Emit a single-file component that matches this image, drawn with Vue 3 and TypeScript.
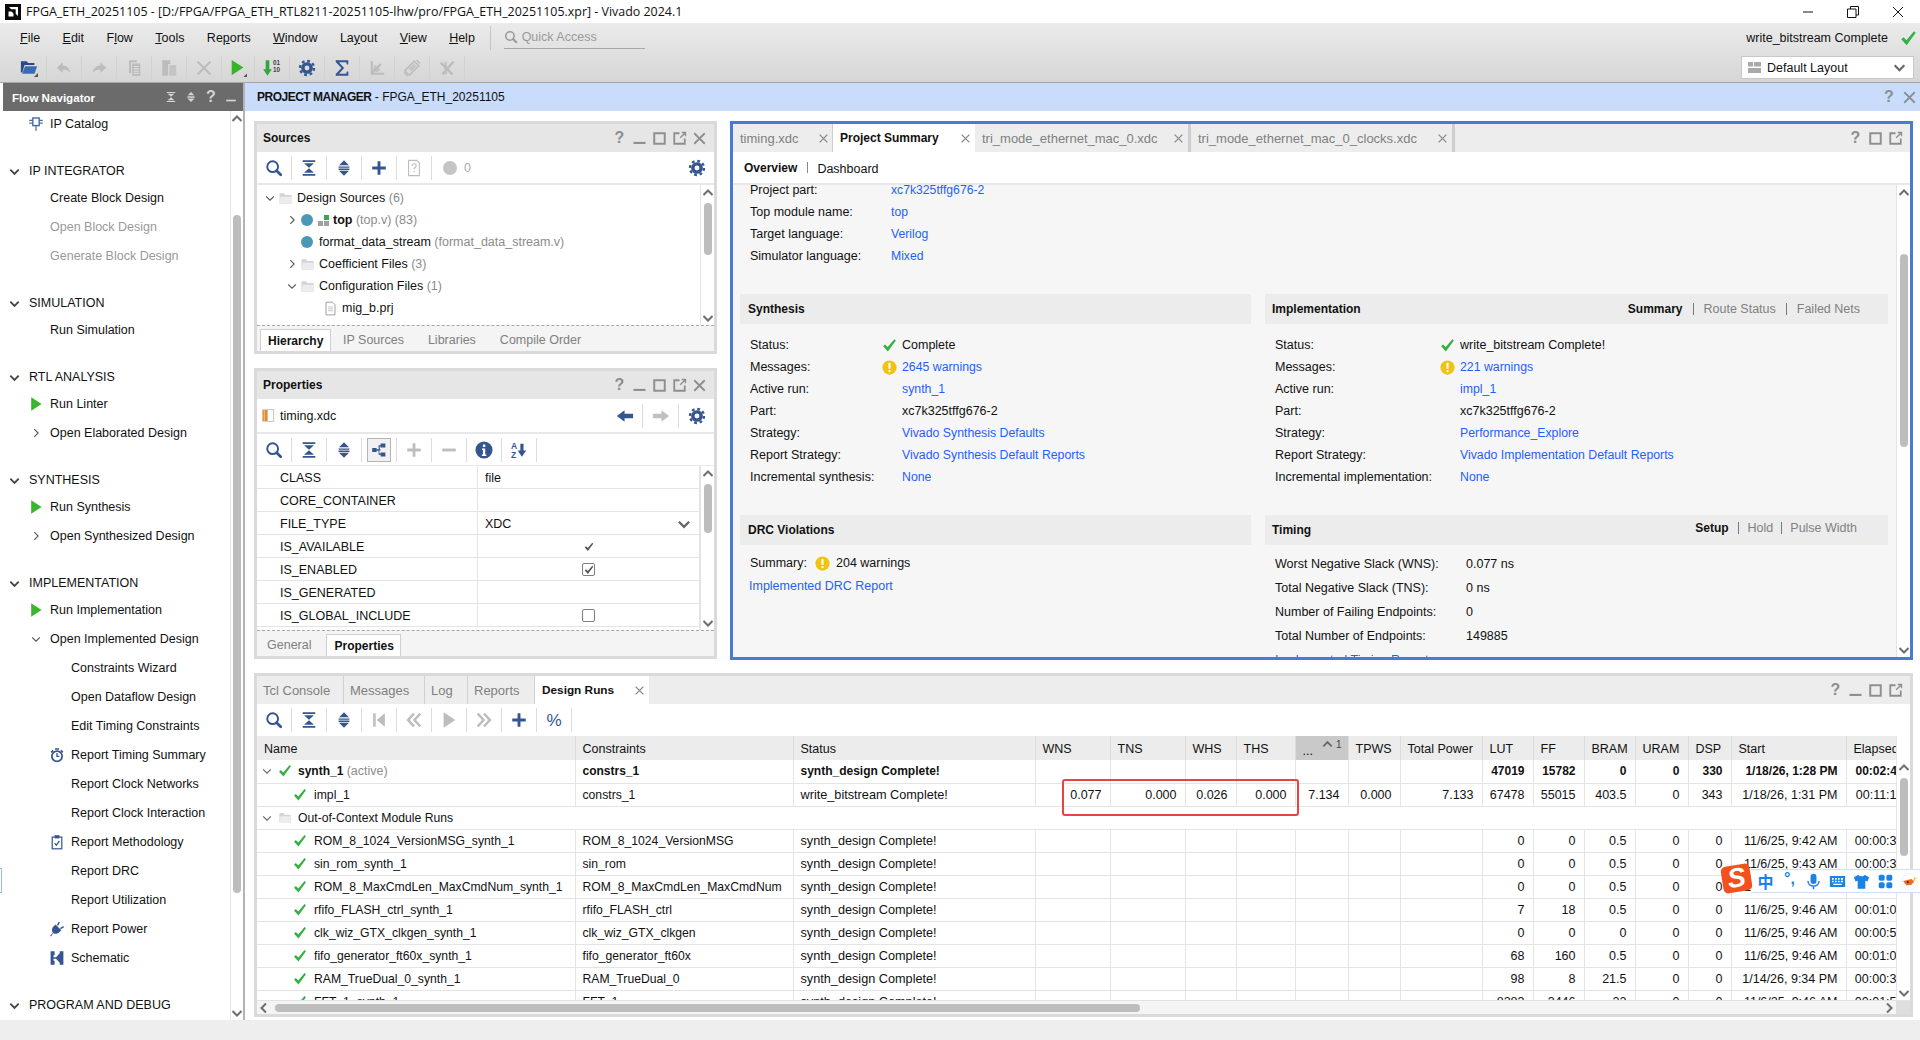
<script setup lang="ts">
interface NavItem { label: string; sub?: boolean; icon?: string; tone?: string; chev?: string; off?: boolean }
interface NavGroup { title: string; items: NavItem[] }
interface Btn { i: string; off?: boolean; sel?: boolean }
interface Run { name: string; icon: string; cons: string; status: string; cells: string[]; bold?: boolean }

const menus = [['F', 'ile'], ['E', 'dit'], ['F', 'l', 'ow'], ['T', 'ools'], ['Re', 'p', 'orts'], ['W', 'indow'], ['La', 'y', 'out'], ['V', 'iew'], ['H', 'elp']]
const menuParts = menus.map((m) => m.length === 2 ? { a: '', u: m[0], b: m[1] } : { a: m[0], u: m[1], b: m[2] })

const mainTools: Btn[] = [
  { i: 'open' }, { i: 'undo', off: true }, { i: 'redo', off: true }, { i: 'copy', off: true }, { i: 'paste', off: true }, { i: 'x', off: true },
  { i: 'playc' }, { i: 'bits' }, { i: 'gear' }, { i: 'sigma' }, { i: 'rt1', off: true }, { i: 'rt2', off: true }, { i: 'rt3', off: true }
]
const srcTools: Btn[] = [{ i: 'search' }, { i: 'collapse' }, { i: 'expand' }, { i: 'plus' }, { i: 'docq', off: true }]
const propTools: Btn[] = [{ i: 'search' }, { i: 'collapse' }, { i: 'expand' }, { i: 'hier', sel: true }, { i: 'plus', off: true }, { i: 'minus', off: true }, { i: 'info' }, { i: 'az' }]
const runTools: Btn[] = [{ i: 'search' }, { i: 'collapse' }, { i: 'expand' }, { i: 'first', off: true }, { i: 'rew', off: true }, { i: 'play', off: true }, { i: 'ffw', off: true }, { i: 'plus' }, { i: 'pct' }]

const nav: NavGroup[] = [
  { title: 'IP INTEGRATOR', items: [{ label: 'Create Block Design' }, { label: 'Open Block Design', off: true }, { label: 'Generate Block Design', off: true }] },
  { title: 'SIMULATION', items: [{ label: 'Run Simulation' }] },
  { title: 'RTL ANALYSIS', items: [{ label: 'Run Linter', icon: 'play', tone: 'green' }, { label: 'Open Elaborated Design', chev: 'right' }] },
  { title: 'SYNTHESIS', items: [{ label: 'Run Synthesis', icon: 'play', tone: 'green' }, { label: 'Open Synthesized Design', chev: 'right' }] },
  {
    title: 'IMPLEMENTATION',
    items: [
      { label: 'Run Implementation', icon: 'play', tone: 'green' }, { label: 'Open Implemented Design', chev: 'down' },
      { label: 'Constraints Wizard', sub: true }, { label: 'Open Dataflow Design', sub: true }, { label: 'Edit Timing Constraints', sub: true },
      { label: 'Report Timing Summary', sub: true, icon: 'clock', tone: 'navy' }, { label: 'Report Clock Networks', sub: true }, { label: 'Report Clock Interaction', sub: true },
      { label: 'Report Methodology', sub: true, icon: 'clip', tone: 'navy' }, { label: 'Report DRC', sub: true }, { label: 'Report Utilization', sub: true },
      { label: 'Report Power', sub: true, icon: 'power', tone: 'navy' }, { label: 'Schematic', sub: true, icon: 'schem', tone: 'navy' }
    ]
  },
  { title: 'PROGRAM AND DEBUG', items: [] }
]

const projectRows = [['Project part:', 'xc7k325tffg676-2'], ['Top module name:', 'top'], ['Target language:', 'Verilog'], ['Simulator language:', 'Mixed']]
const synthRows = [
  { k: 'Status:', v: 'Complete', icon: 'check' }, { k: 'Messages:', v: '2645 warnings', icon: 'warn', link: true }, { k: 'Active run:', v: 'synth_1', link: true },
  { k: 'Part:', v: 'xc7k325tffg676-2' }, { k: 'Strategy:', v: 'Vivado Synthesis Defaults', link: true },
  { k: 'Report Strategy:', v: 'Vivado Synthesis Default Reports', link: true }, { k: 'Incremental synthesis:', v: 'None', link: true }
]
const implRows = [
  { k: 'Status:', v: 'write_bitstream Complete!', icon: 'check' }, { k: 'Messages:', v: '221 warnings', icon: 'warn', link: true }, { k: 'Active run:', v: 'impl_1', link: true },
  { k: 'Part:', v: 'xc7k325tffg676-2' }, { k: 'Strategy:', v: 'Performance_Explore', link: true },
  { k: 'Report Strategy:', v: 'Vivado Implementation Default Reports', link: true }, { k: 'Incremental implementation:', v: 'None', link: true }
]
const timingRows = [['Worst Negative Slack (WNS):', '0.077 ns'], ['Total Negative Slack (TNS):', '0 ns'], ['Number of Failing Endpoints:', '0'], ['Total Number of Endpoints:', '149885']]

const propRows = [
  { k: 'CLASS', v: 'file' }, { k: 'CORE_CONTAINER', v: '' }, { k: 'FILE_TYPE', v: 'XDC', drop: true }, { k: 'IS_AVAILABLE', v: '', tick: true },
  { k: 'IS_ENABLED', v: '', box: 'on' }, { k: 'IS_GENERATED', v: '' }, { k: 'IS_GLOBAL_INCLUDE', v: '', box: 'off' }
]

const heads = ['Name', 'Constraints', 'Status', 'WNS', 'TNS', 'WHS', 'THS', '...', 'TPWS', 'Total Power', 'LUT', 'FF', 'BRAM', 'URAM', 'DSP', 'Start', 'Elapsed']
const widths = [318, 218, 242, 75, 75, 51, 59, 53, 52, 82, 51, 51, 51, 53, 43, 115, 66]
const blank = ['', '', '', '', '', '', '']
const mk = (name: string, cons: string, tail: string[]): Run => ({ name, icon: 'check', cons, status: 'synth_design Complete!', cells: [...blank, ...tail] })
const ooc: Run[] = [
  mk('ROM_8_1024_VersionMSG_synth_1', 'ROM_8_1024_VersionMSG', ['0', '0', '0.5', '0', '0', '11/6/25, 9:42 AM', '00:00:34']),
  mk('sin_rom_synth_1', 'sin_rom', ['0', '0', '0.5', '0', '0', '11/6/25, 9:43 AM', '00:00:32']),
  mk('ROM_8_MaxCmdLen_MaxCmdNum_synth_1', 'ROM_8_MaxCmdLen_MaxCmdNum', ['0', '0', '0.5', '0', '0', '11/6/25, 9:44 AM', '00:00:33']),
  mk('rfifo_FLASH_ctrl_synth_1', 'rfifo_FLASH_ctrl', ['7', '18', '0.5', '0', '0', '11/6/25, 9:46 AM', '00:01:02']),
  mk('clk_wiz_GTX_clkgen_synth_1', 'clk_wiz_GTX_clkgen', ['0', '0', '0', '0', '0', '11/6/25, 9:46 AM', '00:00:51']),
  mk('fifo_generator_ft60x_synth_1', 'fifo_generator_ft60x', ['68', '160', '0.5', '0', '0', '11/6/25, 9:46 AM', '00:01:03']),
  mk('RAM_TrueDual_0_synth_1', 'RAM_TrueDual_0', ['98', '8', '21.5', '0', '0', '1/14/26, 9:34 PM', '00:00:36']),
  mk('FFT_1_synth_1', 'FFT_1', ['8283', '3446', '22', '0', '0', '11/6/25, 9:46 AM', '00:01:52'])
]
const synth: string[] = [...blank, '47019', '15782', '0', '0', '330', '1/18/26, 1:28 PM', '00:02:41']
const impl: string[] = ['0.077', '0.000', '0.026', '0.000', '7.134', '0.000', '7.133', '67478', '55015', '403.5', '0', '343', '1/18/26, 1:31 PM', '00:11:14']
</script>

<template>
  <div class="app">
    <svg class="sprite" aria-hidden="true">
      <symbol id="i-search" viewBox="0 0 20 20"><circle cx="8.5" cy="8.5" r="6" fill="none" stroke="currentColor" stroke-width="2.2" /><path d="M13 13l4.5 4.5" fill="none" stroke="currentColor" stroke-width="3" stroke-linecap="round" /></symbol>
      <symbol id="i-collapse" viewBox="0 0 20 20"><path d="M3 1.5h14v1.8H3zM4.5 4.6h11L10 9.6zM4.5 15.4h11l-5.5-5zM3 16.7h14v1.8H3z" /></symbol>
      <symbol id="i-expand" viewBox="0 0 20 20"><path d="M10 1.5l5.5 5.5h-11zM4 8.2h12v1.5H4zM4 10.6h12v1.5H4zM10 18.5L4.5 13h11z" /></symbol>
      <symbol id="i-plus" viewBox="0 0 20 20"><path d="M8.4 2.5h3.2v5.9h5.9v3.2h-5.9v5.9H8.4v-5.9H2.5V8.4h5.9z" /></symbol>
      <symbol id="i-minus" viewBox="0 0 20 20"><path d="M2.5 8.4h15v3.2h-15z" /></symbol>
      <symbol id="i-docq" viewBox="0 0 20 20"><path d="M4 1.5h9l3 3v14H4z" fill="none" stroke="currentColor" stroke-width="1.2" /><path d="M7.8 7.5c0-3 4.6-3 4.6 0 0 2-2.3 2-2.3 4M10.1 13v1.8" fill="none" stroke="currentColor" stroke-width="1.3" /></symbol>
      <symbol id="i-gear" viewBox="0 0 20 20"><circle cx="10" cy="10" r="7.8" fill="none" stroke="currentColor" stroke-width="2.6" stroke-dasharray="3.1 3.03" /><circle cx="10" cy="10" r="4.6" fill="none" stroke="currentColor" stroke-width="3.8" /></symbol>
      <symbol id="i-open" viewBox="0 0 20 20"><path d="M1 2.5h6.5L9 4.5h7v2.3H5L2.6 15H1z" fill="#294a85" /><path d="M5.6 8H19l-2.8 8.5H2.4z" fill="#3a6cb4" /><path d="M20 15.5V20h-4.5z" fill="#555" /></symbol>
      <symbol id="i-undo" viewBox="0 0 20 20"><path d="M8.5 4L2 9.8l6.5 5.7v-3.6c3.6 0 6.2.6 8.5 3.4-.6-4.8-3.7-8-8.5-8.2z" /></symbol>
      <symbol id="i-redo" viewBox="0 0 20 20"><path d="M11.5 4L18 9.8l-6.5 5.7v-3.6c-3.6 0-6.2.6-8.5 3.4.6-4.8 3.7-8 8.5-8.2z" /></symbol>
      <symbol id="i-copy" viewBox="0 0 20 20"><path d="M4.5 1.5h8.5v2.2H6.8v11.8H4.5zM8 5h9v14H8z" /><path d="M9.8 8.5h5.4M9.8 11h5.4M9.8 13.5h5.4M9.8 16h5.4" stroke="#e6e6e6" stroke-width="1" /></symbol>
      <symbol id="i-paste" viewBox="0 0 20 20"><path d="M2.5 1.5h9v4H9v13H2.5z" /><path d="M10.3 6.8H18v11.7h-7.7z" opacity=".75" /></symbol>
      <symbol id="i-x" viewBox="0 0 20 20"><path d="M3 3l14 14M17 3L3 17" fill="none" stroke="currentColor" stroke-width="2.4" /></symbol>
      <symbol id="i-play" viewBox="0 0 20 20"><path d="M4 1.5L17 10 4 18.5z" /></symbol>
      <symbol id="i-playc" viewBox="0 0 20 20"><path d="M3 1L16 9.5 3 18z" fill="#38b42a" /><path d="M20.5 15.5V20H16z" fill="#555" /></symbol>
      <symbol id="i-bits" viewBox="0 0 20 20"><path d="M3 1.5h4v10h2.8L5 18.5.2 11.5H3z" fill="#2fa83a" /><text x="11" y="7" font-size="7" font-weight="700" font-family="Liberation Sans, sans-serif" fill="#444">01</text><text x="11" y="14.5" font-size="7" font-weight="700" font-family="Liberation Sans, sans-serif" fill="#444">10</text></symbol>
      <symbol id="i-sigma" viewBox="0 0 20 20"><path d="M3 1.5h14v4.5h-1.5L14.6 3.7H6.6l5.8 6.3-5.8 6.3h8l.9-2.3H17v4.5H3v-1.7L9.4 10 3 3.2z" /></symbol>
      <symbol id="i-rt1" viewBox="0 0 20 20"><path d="M3 17.5h15v-2.2H6.500l8.500-9-1.600-1.600L5.400 13V2.500H3z" /><path d="M8 6l6 6-4 3-5-4z" opacity=".75" /></symbol>
      <symbol id="i-rt2" viewBox="0 0 20 20"><path d="M2 13L12.500 2.500l5 5L7 18z" fill="none" stroke="currentColor" stroke-width="1.800" /><path d="M6 11l6-6 3 3-6 6z" opacity=".7" /><path d="M15 1l4 4M1 15l4 4" stroke="currentColor" stroke-width="1.500" /></symbol>
      <symbol id="i-rt3" viewBox="0 0 20 20"><path d="M3 4l13 13M17 3L5 17" fill="none" stroke="currentColor" stroke-width="2.600" /><path d="M7 3h3v14H7z" opacity=".7" /></symbol>
      <symbol id="i-chip" viewBox="0 0 20 20"><rect x="6" y="2.500" width="8" height="9.500" fill="none" stroke="currentColor" stroke-width="1.800" /><path d="M1.500 5.500H6M1.500 9H6M14 5.500h4.500M14 9h4.500M10 12v6.500" fill="none" stroke="currentColor" stroke-width="1.600" /></symbol>
      <symbol id="i-clock" viewBox="0 0 20 20"><circle cx="10" cy="11.500" r="6.400" fill="none" stroke="currentColor" stroke-width="2.200" /><path d="M10 7.500v4.200h3" fill="none" stroke="currentColor" stroke-width="1.600" /><path d="M7.500 1.500h5v2h-5zM2 6l2.500-2.500 1.500 1.500-2.500 2.500zM18 6l-2.500-2.500L14 5l2.500 2.500z" /></symbol>
      <symbol id="i-clip" viewBox="0 0 20 20"><rect x="4" y="3.800" width="12" height="14.700" fill="none" stroke="currentColor" stroke-width="1.500" /><path d="M7 1.500h6v4H7z" /><path d="M7 11.500l2.200 2.500L13 8.500" fill="none" stroke="currentColor" stroke-width="1.500" /></symbol>
      <symbol id="i-power" viewBox="0 0 20 20"><path d="M1.500 18.500l3.300-3.800C3 11.700 3.600 9 5.600 7l2.600-2.600 7.200 7.200-2.600 2.600c-2 2-4.800 2.600-7.600.8L2.600 19.500z" /><path d="M10.500 5.500L13 1.500M14.300 9.500l4-2.500" fill="none" stroke="currentColor" stroke-width="1.800" /></symbol>
      <symbol id="i-schem" viewBox="0 0 20 20"><path d="M2 1.500h5v5H5.600v2.600h3.200l4.600-5V1.500H18v17h-4.600v-2.600l-4.600-5H5.600v2.600H7v5H2z" /></symbol>
      <symbol id="i-check" viewBox="0 0 20 20"><path d="M1.500 11l2.500-2.500L7.600 12 16.500 1.500 18.500 3.300 7.800 18z" /></symbol>
      <symbol id="i-warn" viewBox="0 0 20 20"><circle cx="10" cy="10" r="9.500" fill="#efc30f" /><rect x="8.600" y="3.600" width="2.800" height="8.400" rx="1" fill="#fff" /><rect x="8.600" y="13.400" width="2.800" height="2.800" rx="1" fill="#fff" /></symbol>
      <symbol id="i-folder" viewBox="0 0 20 20"><path d="M2 3h6l1.500 2.200H18V17H2z" fill="#d4d4d4" /><path d="M3.500 7.500H18V17H2z" fill="#ececec" /></symbol>
      <symbol id="i-file" viewBox="0 0 20 20"><path d="M4 1.500h8.500L16 5v13.500H4z" fill="#fff" stroke="#8e8e8e" stroke-width="1.100" /><path d="M6.500 8h7M6.500 10.500h7M6.500 13h7" stroke="#b4b4b4" stroke-width="1" /></symbol>
      <symbol id="i-xdc" viewBox="0 0 20 20"><path d="M9 1.500h9v17H9z" fill="#fff" stroke="#aaa" stroke-width="1" /><path d="M2 1.500h7v17H2z" fill="#de8d36" /><path d="M4 1.500h1.500v17H4z" fill="#f2be76" /></symbol>
      <symbol id="i-hier" viewBox="0 0 20 20"><path d="M1.500 7.500h5.500v5H1.500zM12 2h6v5h-6zM12 13h6v5h-6zM7 9.200h2.500V4h2.500v1.500h-1v4h1v1H10.500v4h1.500V16H9.500v-5H7z" /></symbol>
      <symbol id="i-info" viewBox="0 0 20 20"><path fill-rule="evenodd" d="M10 .5a9.500 9.500 0 1 0 0 19 9.500 9.500 0 0 0 0-19zM8.800 4h2.600v2.800H8.800zM7.800 8.300h3.600V15h1.200v1.600H7.600V15h1.200v-5.100h-1z" /></symbol>
      <symbol id="i-az" viewBox="0 0 20 20"><text x="1" y="8.500" font-size="9.500" font-weight="700" font-family="Liberation Sans, sans-serif">A</text><text x="1" y="18.500" font-size="9.500" font-weight="700" font-family="Liberation Sans, sans-serif">Z</text><path d="M11.500 3h3.500v7.500h3l-4.800 7-4.700-7h3z" /></symbol>
      <symbol id="i-left" viewBox="0 0 20 20"><path d="M1 10l8.500-6.500v4H19v5H9.500v4z" /></symbol>
      <symbol id="i-right" viewBox="0 0 20 20"><path d="M19 10l-8.500-6.500v4H1v5h9.500v4z" /></symbol>
      <symbol id="i-first" viewBox="0 0 20 20"><path d="M3.500 2.500h2.800v15H3.500zM16.500 2.500v15L7.500 10z" /></symbol>
      <symbol id="i-rew" viewBox="0 0 20 20"><path d="M10 3l-6.500 7 6.500 7M17 3l-6.500 7 6.500 7" fill="none" stroke="currentColor" stroke-width="2.800" /></symbol>
      <symbol id="i-ffw" viewBox="0 0 20 20"><path d="M10 3l6.500 7-6.500 7M3 3l6.500 7-6.500 7" fill="none" stroke="currentColor" stroke-width="2.800" /></symbol>
      <symbol id="i-pct" viewBox="0 0 20 20"><text x="10" y="17" text-anchor="middle" font-size="19" font-family="Liberation Sans, sans-serif">%</text></symbol>
      <symbol id="i-max" viewBox="0 0 20 20"><rect x="3" y="3" width="14" height="14" fill="none" stroke="currentColor" stroke-width="2.600" /></symbol>
      <symbol id="i-min" viewBox="0 0 20 20"><rect x="2" y="14.500" width="16" height="2.800" /></symbol>
      <symbol id="i-pop" viewBox="0 0 20 20"><path d="M10 3H3v14h14v-7" fill="none" stroke="currentColor" stroke-width="2.400" /><path d="M13 2h5v5M18 2l-7 7" fill="none" stroke="currentColor" stroke-width="1.800" /></symbol>
      <symbol id="i-up" viewBox="0 0 14 14"><path d="M2.500 9L7 4.500 11.500 9" fill="none" stroke="currentColor" stroke-width="2" /></symbol>
      <symbol id="i-down" viewBox="0 0 14 14"><path d="M2.500 5L7 9.500 11.500 5" fill="none" stroke="currentColor" stroke-width="2" /></symbol>
      <symbol id="i-cright" viewBox="0 0 14 14"><path d="M5 2.500L9.500 7 5 11.500" fill="none" stroke="currentColor" stroke-width="1.300" /></symbol>
      <symbol id="i-cdown" viewBox="0 0 14 14"><path d="M2.500 5L7 9.500 11.500 5" fill="none" stroke="currentColor" stroke-width="1.300" /></symbol>
      <symbol id="i-cleft" viewBox="0 0 14 14"><path d="M9 2.500L4.500 7 9 11.500" fill="none" stroke="currentColor" stroke-width="2" /></symbol>
      <symbol id="i-cr2" viewBox="0 0 14 14"><path d="M5 2.500L9.500 7 5 11.500" fill="none" stroke="currentColor" stroke-width="2" /></symbol>
      <symbol id="i-layout" viewBox="0 0 14 14"><path d="M0 1h5.500v5H0zM6.500 1H14v5H6.500zM0 7.500h14V13H0z" /></symbol>
      <symbol id="i-mic" viewBox="0 0 20 20"><rect x="6.500" y="1" width="7" height="12" rx="3.500" /><path d="M3.500 9.500c0 8 13 8 13 0M10 16v3" fill="none" stroke="currentColor" stroke-width="1.800" /></symbol>
      <symbol id="i-keys" viewBox="0 0 20 20"><path fill-rule="evenodd" d="M1 3.500h18v13H1zM3.500 6v1.800h2V6zM7 6v1.800h2V6zM10.500 6v1.800h2V6zM14 6v1.800h2.500V6zM3.500 9.200V11h2V9.200zM7 9.200V11h2V9.200zM10.500 9.200V11h2V9.200zM14 9.200V11h2.500V9.200zM5 12.500v1.600h10v-1.600z" /></symbol>
      <symbol id="i-shirt" viewBox="0 0 20 20"><path d="M6.500 2L1 5l2 5 2.500-1v9.500h9V9l2.500 1 2-5-5.500-3c-.5 2.500-6.500 2.500-7 0z" /></symbol>
      <symbol id="i-grid" viewBox="0 0 20 20"><rect x="2" y="2" width="7" height="7" rx="2" /><rect x="11" y="2" width="7" height="7" rx="2" /><rect x="2" y="11" width="7" height="7" rx="2" /><rect x="11" y="11" width="7" height="7" rx="2" /></symbol>
      <symbol id="i-fox" viewBox="0 0 20 20"><circle cx="10" cy="10" r="9.500" fill="#fff" stroke="#eee" /><path d="M2.500 9.500l10-2.500 3 3-3.500 4-6 .5z" fill="#ee6a2a" /><circle cx="8" cy="10.500" r="1.200" fill="#222" /><path d="M15 3l1 2.500 2.500.5-2 1.500.3 2.500-1.800-1.300" fill="#f5c73a" /></symbol>
    </svg>

    <header class="titlebar">
      <svg class="logo" viewBox="0 0 16 16"><rect width="16" height="16" fill="#0a0a0a" /><path d="M4 3h9v9l-2.300-2.200V5.200H6.200zM3.500 7.500L6.500 7.500 8.500 9.500V12.500H3.500z" fill="#fff" /></svg>
      <span class="title-text">FPGA_ETH_20251105 - [D:/FPGA/FPGA_ETH_RTL8211-20251105-lhw/pro/FPGA_ETH_20251105.xpr] - Vivado 2024.1</span>
      <div class="winctl">
        <svg viewBox="0 0 12 12"><path d="M1 6h10" stroke="#111" /></svg>
        <svg viewBox="0 0 12 12"><path d="M3.500 3V.500h8V9H9M.500 3h8.500v8.500H.500z" fill="none" stroke="#111" /></svg>
        <svg viewBox="0 0 12 12"><path d="M1 1l10 10M11 1L1 11" stroke="#111" /></svg>
      </div>
    </header>

    <div class="chrome">
      <div class="menubar">
        <span v-for="(m, k) in menuParts" :key="k" class="menu">{{ m.a }}<u>{{ m.u }}</u>{{ m.b }}</span>
        <span class="menu-sep"></span>
        <div class="quick">
          <svg class="ic quick-ic"><use href="#i-search" /></svg>
          <span>Quick Access</span>
        </div>
        <div class="bit-status">
          <span>write_bitstream Complete</span>
          <svg class="ic check"><use href="#i-check" /></svg>
        </div>
      </div>
      <div class="toolbar-main">
        <span v-for="b in mainTools" :key="b.i" class="mbtn" :class="{ off: b.off, narrow: b.i === 'playc' }"><svg class="ic"><use :href="'#i-' + b.i" /></svg></span>
        <div class="layout-select">
          <svg class="ic lay-ic"><use href="#i-layout" /></svg>
          <span>Default Layout</span>
          <svg class="ic lay-ch"><use href="#i-down" /></svg>
        </div>
      </div>
    </div>

    <main class="main">
      <aside class="nav">
        <div class="nav-head">
          <span>Flow Navigator</span>
          <div class="nav-head-ic">
            <svg class="ic"><use href="#i-collapse" /></svg>
            <svg class="ic"><use href="#i-expand" /></svg>
            <b>?</b>
            <svg class="ic"><use href="#i-min" /></svg>
          </div>
        </div>
        <div class="nav-body">
          <div class="nav-list">
            <div class="nav-item first"><span class="slot"><svg class="ic navy-2"><use href="#i-chip" /></svg></span>IP Catalog</div>
            <section v-for="g in nav" :key="g.title" class="nav-group">
              <div class="nav-title"><svg class="ic nav-ch"><use href="#i-down" /></svg>{{ g.title }}</div>
              <div v-for="it in g.items" :key="it.label" class="nav-item" :class="{ sub: it.sub, off: it.off }">
                <span v-if="it.icon" class="slot" :class="it.tone"><svg class="ic"><use :href="'#i-' + it.icon" /></svg></span>
                <span v-else-if="it.chev" class="slot gray"><svg class="ic small"><use :href="it.chev === 'right' ? '#i-cright' : '#i-cdown'" /></svg></span>
                {{ it.label }}
              </div>
            </section>
          </div>
          <div class="vs vs-nav"><svg class="arr"><use href="#i-up" /></svg><div class="thumb"></div><svg class="arr end"><use href="#i-down" /></svg></div>
        </div>
      </aside>
      <div class="split"></div>

      <div class="work">
        <div class="pm">
          <span><strong>PROJECT MANAGER</strong> - FPGA_ETH_20251105</span>
          <div class="pm-ic"><b class="q">?</b><svg class="ic"><use href="#i-x" /></svg></div>
        </div>

        <div class="work-body">
          <div class="top">
            <div class="left-col">
              <section class="panel sources">
                <div class="p-head">
                  <b>Sources</b>
                  <div class="p-ctl"><i class="q">?</i><svg class="ic"><use href="#i-min" /></svg><svg class="ic"><use href="#i-max" /></svg><svg class="ic"><use href="#i-pop" /></svg><svg class="ic"><use href="#i-x" /></svg></div>
                </div>
                <div class="tools line2">
                  <span v-for="b in srcTools" :key="b.i" class="tbtn" :class="{ off: b.off }"><svg class="ic"><use :href="'#i-' + b.i" /></svg></span>
                  <span class="dot"></span><span class="zero">0</span>
                  <svg class="ic gear"><use href="#i-gear" /></svg>
                </div>
                <div class="tree-wrap">
                  <div class="tree">
                    <div class="tr lv0"><svg class="ic chv"><use href="#i-cdown" /></svg><span class="isl"><svg class="ic fo"><use href="#i-folder" /></svg></span><span>Design Sources <em>(6)</em></span></div>
                    <div class="tr lv1"><svg class="ic chv"><use href="#i-cright" /></svg><span class="isl"><span class="teal"></span></span><span class="mini"><i class="g"></i><i></i><i></i></span><span><b>top</b> <em>(top.v) (83)</em></span></div>
                    <div class="tr lv1"><span class="chv"></span><span class="isl"><span class="teal"></span></span><span>format_data_stream <em>(format_data_stream.v)</em></span></div>
                    <div class="tr lv1"><svg class="ic chv"><use href="#i-cright" /></svg><span class="isl"><svg class="ic fo"><use href="#i-folder" /></svg></span><span>Coefficient Files <em>(3)</em></span></div>
                    <div class="tr lv1"><svg class="ic chv"><use href="#i-cdown" /></svg><span class="isl"><svg class="ic fo"><use href="#i-folder" /></svg></span><span>Configuration Files <em>(1)</em></span></div>
                    <div class="tr lv2"><span class="isl"><svg class="ic fo"><use href="#i-file" /></svg></span><span>mig_b.prj</span></div>
                  </div>
                  <div class="vs vs-src"><svg class="arr"><use href="#i-up" /></svg><div class="thumb"></div><svg class="arr end"><use href="#i-down" /></svg></div>
                </div>
                <div class="ptabs">
                  <span class="ptab on">Hierarchy</span><span class="ptab">IP Sources</span><span class="ptab">Libraries</span><span class="ptab">Compile Order</span>
                </div>
              </section>

              <section class="panel props">
                <div class="p-head">
                  <b>Properties</b>
                  <div class="p-ctl"><i class="q">?</i><svg class="ic"><use href="#i-min" /></svg><svg class="ic"><use href="#i-max" /></svg><svg class="ic"><use href="#i-pop" /></svg><svg class="ic"><use href="#i-x" /></svg></div>
                </div>
                <div class="file-row">
                  <svg class="ic xdc"><use href="#i-xdc" /></svg>
                  <span>timing.xdc</span>
                  <div class="file-nav">
                    <span class="fb"><svg class="ic navy"><use href="#i-left" /></svg></span>
                    <span class="fb"><svg class="ic dim"><use href="#i-right" /></svg></span>
                    <span class="fb last"><svg class="ic navy"><use href="#i-gear" /></svg></span>
                  </div>
                </div>
                <div class="tools line1">
                  <span v-for="b in propTools" :key="b.i" class="tbtn" :class="{ off: b.off, sel: b.sel }"><svg class="ic"><use :href="'#i-' + b.i" /></svg></span>
                </div>
                <div class="ptable-wrap">
                  <div class="ptable">
                    <div v-for="r in propRows" :key="r.k" class="prow">
                      <span class="pk">{{ r.k }}</span>
                      <span class="pv" :class="{ center: r.tick || r.box }">
                        {{ r.v }}
                        <svg v-if="r.drop" class="ic drop"><use href="#i-down" /></svg>
                        <svg v-if="r.tick" class="ic tick"><use href="#i-check" /></svg>
                        <span v-if="r.box" class="cbx"><svg v-if="r.box === 'on'" class="ic"><use href="#i-check" /></svg></span>
                      </span>
                    </div>
                  </div>
                  <div class="vs vs-prop"><svg class="arr"><use href="#i-up" /></svg><div class="thumb"></div><svg class="arr end"><use href="#i-down" /></svg></div>
                </div>
                <div class="ptabs props-tabs">
                  <span class="ptab">General</span><span class="ptab on">Properties</span>
                </div>
              </section>
            </div>

            <section class="panel summary">
              <div class="doc-tabs">
                <span class="dt t1">timing.xdc<svg class="ic cx"><use href="#i-x" /></svg></span>
                <span class="dt t2 on">Project Summary<svg class="ic cx"><use href="#i-x" /></svg></span>
                <span class="dt t3">tri_mode_ethernet_mac_0.xdc<svg class="ic cx"><use href="#i-x" /></svg></span>
                <span class="dt t4">tri_mode_ethernet_mac_0_clocks.xdc<svg class="ic cx"><use href="#i-x" /></svg></span>
                <div class="p-ctl"><i class="q">?</i><svg class="ic"><use href="#i-max" /></svg><svg class="ic"><use href="#i-pop" /></svg></div>
              </div>
              <div class="subtabs"><b>Overview</b><span class="vbar"></span><span class="dash">Dashboard</span></div>
              <div class="sum-wrap">
                <div class="sum">
                  <div class="proj">
                    <div v-for="r in projectRows" :key="r[0]" class="kv"><span class="k-proj">{{ r[0] }}</span><a>{{ r[1] }}</a></div>
                  </div>
                  <div class="sec-grid">
                    <div>
                      <div class="sec-head"><b>Synthesis</b></div>
                      <div class="rows">
                        <div v-for="r in synthRows" :key="r.k" class="kv"><span class="k-syn">{{ r.k }}</span><span class="sl"><svg v-if="r.icon" class="ic" :class="r.icon"><use :href="'#i-' + r.icon" /></svg></span><a v-if="r.link">{{ r.v }}</a><span v-else>{{ r.v }}</span></div>
                      </div>
                    </div>
                    <div>
                      <div class="sec-head"><b class="impl-t">Implementation</b>
                        <div class="sec-tabs impl-tabs"><b>Summary</b><span class="vb"></span><span>Route Status</span><span class="vb"></span><span>Failed Nets</span></div>
                      </div>
                      <div class="rows">
                        <div v-for="r in implRows" :key="r.k" class="kv"><span class="k-imp">{{ r.k }}</span><span class="sl"><svg v-if="r.icon" class="ic" :class="r.icon"><use :href="'#i-' + r.icon" /></svg></span><a v-if="r.link">{{ r.v }}</a><span v-else>{{ r.v }}</span></div>
                      </div>
                    </div>
                    <div class="sec2">
                      <div class="sec-head"><b>DRC Violations</b></div>
                      <div class="drc">
                        <div class="kv"><span class="k-drc">Summary:</span><svg class="ic warn"><use href="#i-warn" /></svg><span>204 warnings</span></div>
                        <div class="kv drc-link"><a>Implemented DRC Report</a></div>
                      </div>
                    </div>
                    <div class="sec2">
                      <div class="sec-head"><b class="impl-t">Timing</b>
                        <div class="sec-tabs time-tabs"><b>Setup</b><span class="vb"></span><span>Hold</span><span class="vb"></span><span>Pulse Width</span></div>
                      </div>
                      <div class="timing">
                        <div v-for="r in timingRows" :key="r[0]" class="kv"><span class="k-tim">{{ r[0] }}</span><span>{{ r[1] }}</span></div>
                        <div class="kv"><a>Implemented Timing Report</a></div>
                      </div>
                    </div>
                  </div>
                </div>
                <div class="vs vs-sum"><svg class="arr"><use href="#i-up" /></svg><div class="thumb"></div><svg class="arr end"><use href="#i-down" /></svg></div>
              </div>
            </section>
          </div>

          <section class="panel runs">
            <div class="doc-tabs run-tabs">
              <span class="rt r1">Tcl Console</span><span class="rt r2">Messages</span><span class="rt r3">Log</span><span class="rt r4">Reports</span>
              <span class="rt r5 on">Design Runs<svg class="ic cx"><use href="#i-x" /></svg></span>
              <div class="p-ctl"><i class="q">?</i><svg class="ic"><use href="#i-min" /></svg><svg class="ic"><use href="#i-max" /></svg><svg class="ic"><use href="#i-pop" /></svg></div>
            </div>
            <div class="tools run-tools">
              <span v-for="b in runTools" :key="b.i" class="tbtn" :class="{ off: b.off }"><svg class="ic"><use :href="'#i-' + b.i" /></svg></span>
            </div>
            <div class="run-wrap">
              <div class="run-clip">
                <table class="rtable">
                  <colgroup><col v-for="(w, k) in widths" :key="k" :style="{ width: w + 'px' }" /></colgroup>
                  <thead>
                    <tr>
                      <th v-for="h in heads" :key="h" :class="{ sorted: h === '...' }">
                        {{ h }}
                        <span v-if="h === '...'" class="sort"><svg class="ic"><use href="#i-up" /></svg>1</span>
                      </th>
                    </tr>
                  </thead>
                  <tbody>
                    <tr class="bold">
                      <td class="nm"><span class="nm-in"><svg class="ic tw"><use href="#i-cdown" /></svg><svg class="ic check c0"><use href="#i-check" /></svg><span>synth_1 <em>(active)</em></span></span></td>
                      <td>constrs_1</td><td>synth_design Complete!</td>
                      <td v-for="(c, k) in synth" :key="k" class="n">{{ c }}</td>
                    </tr>
                    <tr>
                      <td class="nm"><span class="nm-in lv"><svg class="ic check"><use href="#i-check" /></svg><span>impl_1</span></span></td>
                      <td>constrs_1</td><td>write_bitstream Complete!</td>
                      <td v-for="(c, k) in impl" :key="k" class="n">{{ c }}</td>
                    </tr>
                    <tr>
                      <td colspan="17" class="nm"><span class="nm-in"><svg class="ic tw"><use href="#i-cdown" /></svg><svg class="ic fo c0"><use href="#i-folder" /></svg><span>Out-of-Context Module Runs</span></span></td>
                    </tr>
                    <tr v-for="r in ooc" :key="r.name">
                      <td class="nm"><span class="nm-in lv"><svg class="ic check"><use href="#i-check" /></svg><span>{{ r.name }}</span></span></td>
                      <td>{{ r.cons }}</td><td>{{ r.status }}</td>
                      <td v-for="(c, k) in r.cells" :key="k" class="n">{{ c }}</td>
                    </tr>
                  </tbody>
                </table>
                <div class="redbox"></div>
              </div>
              <div class="vs vs-run"><svg class="arr"><use href="#i-up" /></svg><div class="thumb"></div><svg class="arr end"><use href="#i-down" /></svg></div>
            </div>
            <div class="hs">
              <svg class="arr"><use href="#i-cleft" /></svg>
              <div class="hthumb"></div>
              <svg class="arr hr"><use href="#i-cr2" /></svg>
              <div class="corner"></div>
            </div>
          </section>
        </div>
      </div>
    </main>

    <footer class="status"></footer>

    <div class="edge-win"></div>
    <div class="ime">
      <span class="ime-s">S</span>
      <div class="ime-bar">
        <span class="ime-cn">中</span>
        <span class="ime-p">°,</span>
        <svg class="ic"><use href="#i-mic" /></svg>
        <svg class="ic"><use href="#i-keys" /></svg>
        <svg class="ic"><use href="#i-shirt" /></svg>
        <svg class="ic"><use href="#i-grid" /></svg>
        <svg class="ic"><use href="#i-fox" /></svg>
      </div>
    </div>
  </div>
</template>

<style>
html, body { margin: 0; padding: 0; overflow: hidden; background: #fff; }
</style>

<style scoped>
.app { position: relative; width: 1920px; height: 1040px; display: flex; flex-direction: column; overflow: hidden; background: #fff; color: #111; font-family: "Liberation Sans", Arial, sans-serif; font-size: 12.5px; }
.sprite { position: absolute; width: 0; height: 0; overflow: hidden; }
.ic { width: 18px; height: 18px; flex: none; display: block; fill: currentColor; }
em { font-style: normal; color: #8c8c8c; }
a { color: #1f5eff; }

.titlebar { height: 23px; flex: none; display: flex; align-items: center; padding-left: 5px; background: #fff; }
.logo { width: 16px; height: 16px; flex: none; }
.title-text { margin-left: 5px; font-family: "Open Sans", sans-serif; font-size: 12.45px; white-space: nowrap; }
.winctl { margin-left: auto; display: flex; align-items: center; gap: 33px; padding-right: 16px; }
.winctl svg { width: 12px; height: 12px; display: block; }

.chrome { height: 60px; flex: none; background: linear-gradient(#ebebeb, #d6d6d6); border-bottom: 1px solid #a6a6a6; box-sizing: border-box; display: flex; flex-direction: column; }
.menubar { height: 30px; flex: none; display: flex; align-items: center; padding-left: 20px; gap: 22.4px; }
.menu { white-space: nowrap; }
.menu-sep { width: 1px; height: 24px; background: #c4c4c4; margin-left: -7px; }
.quick { width: 141px; height: 24px; margin-left: -10px; margin-top: -2px; box-sizing: border-box; display: flex; align-items: center; gap: 4px; color: #9a9a9a; border-bottom: 1px solid #a8a8a8; }
.quick-ic { width: 14px; height: 14px; color: #9a9a9a; }
.bit-status { margin-left: auto; display: flex; align-items: center; gap: 12px; padding-right: 3px; }
.check { color: #35b043; }
.bit-status .check { width: 17px; height: 17px; }

.toolbar-main { height: 29px; flex: none; display: flex; align-items: center; padding-left: 12px; }
.mbtn { width: 35px; height: 24px; box-sizing: border-box; border-right: 1px solid #d2d2d2; display: flex; align-items: center; justify-content: center; color: #34558f; }
.mbtn.narrow { width: 33px; }
.mbtn.off { color: #bcbcbc; }
.layout-select { margin-left: auto; margin-right: 6px; width: 173px; height: 23px; box-sizing: border-box; background: #fff; border: 1px solid #c8c8c8; display: flex; align-items: center; padding: 0 6px; }
.lay-ic { width: 13px; height: 13px; color: #aaa; margin-right: 6px; }
.lay-ch { width: 15px; height: 15px; margin-left: auto; color: #666; }

.main { flex: 1; min-height: 0; display: flex; }
.nav { width: 240px; margin-left: 3px; flex: none; display: flex; flex-direction: column; }
.nav-head { height: 28px; flex: none; background: #6b6b6b; color: #fff; font-weight: 700; font-size: 11.6px; display: flex; align-items: center; padding-left: 9px; }
.nav-head-ic { margin-left: auto; display: flex; align-items: center; gap: 4px; color: #d4d4d4; padding-right: 4px; }
.nav-head-ic .ic { width: 16px; height: 16px; padding: 2px 0; box-sizing: border-box; }
.nav-head-ic b { font-size: 16px; width: 16px; text-align: center; }
.nav-body { flex: 1; min-height: 0; display: flex; }
.nav-list { width: 227px; flex: none; overflow: hidden; }
.nav-item { height: 29px; display: flex; align-items: center; padding-left: 47px; white-space: nowrap; }
.nav-item.first { margin-top: -2px; }
.nav-item.sub { padding-left: 68px; }
.nav-item.off { color: #999; }
.slot { width: 29px; margin-left: -29px; display: flex; justify-content: center; flex: none; }
.slot .ic { width: 16px; height: 16px; }
.slot .small { width: 12px; height: 12px; }
.green { color: #3ab52c; }
.navy { color: #34558f; }
.navy-2 { color: #4a6fa8; width: 16px !important; height: 16px !important; }
.gray { color: #555; }
.nav-group { margin-top: 21px; }
.nav-title { height: 24px; display: flex; align-items: center; white-space: nowrap; padding-left: 5px; }
.nav-ch { width: 13px; height: 13px; color: #444; margin-right: 8px; }

.vs { flex: none; width: 14px; box-sizing: border-box; border-left: 1px solid #e4e4e4; display: flex; flex-direction: column; align-items: center; background: #fff; color: #6e6e6e; }
.arr { width: 14px; height: 14px; flex: none; display: block; margin-top: 1px; }
.arr.end { margin-top: auto; }
.thumb { width: 8px; background: #bdbdbd; border-radius: 4px; flex: none; }
.vs-nav { width: 13px; }
.vs-nav .thumb { margin-top: 89px; height: 678px; }
.vs-src .thumb { margin-top: 3px; height: 52px; }
.vs-prop .thumb { margin-top: 3px; height: 49px; }
.vs-sum .thumb { margin-top: 54px; height: 193px; }
.vs-run { padding-top: 24px; }
.vs-run .thumb { margin-top: 3px; height: 78px; }

.split { width: 2px; background: #b4b4b4; flex: none; }
.work { flex: 1; min-width: 0; display: flex; flex-direction: column; }
.pm { height: 28px; flex: none; background: #c9dcfb; display: flex; align-items: center; padding-left: 12px; font-size: 12px; }
.pm strong { letter-spacing: -0.5px; }
.pm-ic { margin-left: auto; display: flex; align-items: center; gap: 5px; color: #8a8f98; padding-right: 3px; }
.pm-ic .ic { width: 15px; height: 15px; }
.q { font-family: "Liberation Sans", sans-serif; font-weight: 700; font-style: normal; font-size: 16px; width: 16px; text-align: center; }

.work-body { flex: 1; min-height: 0; display: flex; flex-direction: column; padding: 10px 7px 0 9px; gap: 13px; }
.top { display: flex; gap: 13px; height: 539px; flex: none; }
.left-col { width: 463px; flex: none; display: flex; flex-direction: column; gap: 14px; }

.panel { box-sizing: border-box; border: 3px solid #dadada; background: #fff; display: flex; flex-direction: column; min-width: 0; }
.sources { height: 233px; flex: none; }
.props { height: 291px; flex: none; }
.p-head { height: 28px; flex: none; background: #e6e6e6; display: flex; align-items: center; padding-left: 6px; }
.p-head b { font-size: 12px; }
.p-ctl { margin-left: auto; display: flex; align-items: center; color: #8e8e8e; gap: 5px; padding-right: 7px; }
.p-ctl .ic { width: 15px; height: 15px; }
.p-ctl .q { width: 15px; }
.tools { height: 31px; flex: none; display: flex; align-items: center; color: #34558f; box-sizing: content-box; }
.line2 { border-bottom: 2px solid #e8e8e8; }
.line1 { border-bottom: 1px solid #e8e8e8; }
.tbtn { width: 35px; height: 24px; box-sizing: border-box; border-right: 1px solid #dcdcdc; display: flex; align-items: center; justify-content: center; flex: none; }
.tbtn.off { color: #bdbdbd; }
.tbtn.sel .ic { width: 24px; height: 24px; padding: 3px; box-sizing: border-box; background: #f1f1f1; border: 1px solid #b4b4b4; }
.dot { width: 14px; height: 14px; border-radius: 50%; background: #c4c4c4; margin-left: 11px; flex: none; }
.zero { color: #aaa; margin-left: 7px; }
.gear { margin-left: auto; margin-right: 8px; }

.tree-wrap { height: 140px; flex: none; display: flex; }
.tree { flex: 1; min-width: 0; padding-top: 2px; overflow: hidden; }
.tr { height: 22px; display: flex; align-items: center; white-space: nowrap; }
.lv0 { padding-left: 7px; }
.lv1 { padding-left: 29px; }
.lv2 { padding-left: 64px; }
.chv { width: 12px; height: 12px; flex: none; color: #555; }
.isl { width: 18px; flex: none; display: flex; justify-content: center; margin-right: 3px; }
.fo { width: 15px; height: 15px; }
.teal { width: 12px; height: 12px; border-radius: 50%; background: #4a98b6; display: block; }
.mini { width: 11px; height: 11px; display: grid; grid-template-columns: 1fr 1fr; gap: 1px; margin: 0 4px 0 -1px; }
.mini i { background: #a0a0a0; }
.mini i.g { background: #3aa655; grid-column: 2; }
.mini i:nth-child(2) { grid-column: 1; grid-row: 2; }
.mini i:nth-child(3) { grid-column: 2; grid-row: 2; }
.ptabs { flex: none; box-sizing: border-box; border-top: 1px dashed #a8a8a8; background: #f4f4f4; display: flex; align-items: flex-end; padding-left: 3px; height: 26px; }
.ptab { height: 22px; padding: 0 12px; display: flex; align-items: center; color: #808080; box-sizing: border-box; }
.ptab.on { background: #fff; border: 1px solid #cfcfcf; border-bottom: none; color: #111; font-weight: 700; font-size: 12px; padding: 0 7px; width: 71px; }
.props-tabs .ptab { padding: 0 7px; }
.props-tabs .ptab.on { width: 75px; margin-left: 8px; }

.file-row { height: 33px; flex: none; border-bottom: 2px solid #e8e8e8; display: flex; align-items: center; padding-left: 4px; }
.xdc { width: 14px; height: 17px; margin-right: 5px; }
.file-nav { margin-left: auto; display: flex; align-items: center; }
.fb { width: 36px; height: 24px; display: flex; align-items: center; justify-content: center; border-right: 1px solid #dcdcdc; box-sizing: border-box; }
.fb.last { border-right: none; width: 35px; }
.dim { color: #c0c0c0; }
.ptable-wrap { height: 164px; flex: none; display: flex; }
.ptable { flex: 1; min-width: 0; border-right: 1px solid #e4e4e4; }
.prow { height: 23px; box-sizing: border-box; border-bottom: 1px solid #e4e4e4; display: flex; align-items: center; }
.pk { width: 221px; box-sizing: border-box; padding: 1px 0 0 23px; flex: none; height: 100%; display: flex; align-items: center; border-right: 1px solid #e4e4e4; }
.pv { flex: 1; padding: 1px 0 0 7px; display: flex; align-items: center; position: relative; height: 100%; box-sizing: border-box; }
.pv.center { justify-content: center; padding-left: 0; }
.drop { width: 16px; height: 16px; margin-left: auto; margin-right: 7px; color: #666; }
.tick { width: 10px; height: 10px; color: #555; }
.cbx { width: 13px; height: 13px; box-sizing: border-box; border: 1px solid #808080; border-radius: 2px; background: #fff; display: flex; align-items: center; justify-content: center; color: #555; }
.cbx .ic { width: 10px; height: 10px; }

.summary { flex: 1; border-color: #4a7bd0; }
.doc-tabs { height: 28px; flex: none; background: #ededed; display: flex; align-items: stretch; font-size: 13px; }
.doc-tabs .p-ctl { align-self: center; }
.dt { box-sizing: border-box; display: flex; align-items: center; color: #808080; padding-left: 7px; position: relative; border-right: 3px solid #cfcfcf; white-space: nowrap; }
.dt.on { background: #fff; color: #111; font-weight: 700; font-size: 12px; border-right: none; }
.cx { width: 11px; height: 11px; color: #8a8a8a; margin-left: auto; margin-right: 4px; }
.t1 { width: 100px; border-right-width: 1px; }
.t2 { width: 142px; }
.t3 { width: 216px; }
.t4 { width: 264px; }
.t1 .cx { margin-right: 3px; }
.subtabs { height: 31px; flex: none; border-bottom: 2px solid #e8e8e8; background: #fff; display: flex; align-items: center; padding-left: 11px; }
.subtabs b { font-size: 12px; }
.vbar { width: 1px; height: 11px; background: #888; margin: 0 9px 0 10px; }
.dash { margin-top: 3px; }
.sum-wrap { flex: 1; min-height: 0; display: flex; }
.sum { flex: 1; min-width: 0; background: #f6f6f6; overflow: hidden; }
.proj { margin-top: -6px; padding-left: 17px; }
.proj a { font-size: 12.2px; }
.kv { height: 22px; display: flex; align-items: center; white-space: nowrap; }
.k-proj { width: 141px; flex: none; }
.sec-grid { margin-top: 27px; padding: 0 8px 0 7px; display: grid; grid-template-columns: 511px 623px; column-gap: 14px; }
.sec2 { margin-top: 27px; }
.sec-head { height: 30px; background: #ececec; display: flex; align-items: center; padding-left: 8px; }
.sec-head b { font-size: 12px; }
.impl-t { margin-left: -1px; }
.rows { padding: 10px 0 0 10px; }
.rows a { font-size: 12.3px; }
.k-syn { width: 130px; flex: none; }
.k-imp { width: 163px; flex: none; }
.sl { width: 18px; flex: none; margin-right: 4px; display: flex; justify-content: center; }
.sl .ic { width: 15px; height: 15px; }
.warn { width: 15px; height: 15px; }
.sec-tabs { margin-left: auto; display: flex; align-items: center; color: #808080; }
.sec-tabs b { color: #111; }
.vb { width: 1px; height: 12px; background: #777; }
.impl-tabs { padding-right: 28px; }
.impl-tabs .vb { margin: 0 10px; }
.time-tabs { padding-right: 31px; margin-top: -4px; }
.time-tabs .vb { margin: 0 9px; }
.time-tabs .vb:nth-of-type(n+3) { margin: 0 8px; }
.drc { padding: 7px 0 0 10px; }
.k-drc { width: 65px; flex: none; }
.drc .warn { margin-right: 6px; }
.drc-link { margin-top: 1px; margin-left: -1px; }
.timing { padding: 7px 0 0 10px; }
.timing .kv { height: 24px; }
.k-tim { width: 191px; flex: none; }

.runs { height: 344px; flex: none; }
.run-tabs { color: #808080; }
.rt { box-sizing: border-box; display: flex; align-items: center; padding-left: 6px; white-space: nowrap; border-right: 1px solid #d0d0d0; }
.rt.on { background: #fff; color: #111; font-weight: 700; font-size: 11.8px; border-right: none; padding-left: 7px; }
.r1 { width: 87px; }
.r2 { width: 81px; }
.r3 { width: 43px; }
.r4 { width: 67px; }
.r5 { width: 114px; }
.run-tools { height: 32px; }
.run-wrap { height: 264px; flex: none; display: flex; }
.run-clip { position: relative; width: 1639px; flex: none; overflow: hidden; }
.rtable { width: 1655px; table-layout: fixed; border-collapse: collapse; font-size: 12.5px; }
.rtable th { height: 24px; padding: 2px 7px 0; box-sizing: border-box; font-weight: 400; text-align: left; background: #ececec; border-right: 1px solid #dcdcdc; white-space: nowrap; overflow: hidden; position: relative; }
.rtable th.sorted { background: #c9c9c9; padding-top: 6px; }
.sort { position: absolute; right: 6px; top: 2px; display: flex; align-items: center; font-size: 10px; color: #444; }
.sort .ic { width: 13px; height: 13px; color: #666; margin-right: 2px; }
.rtable td { height: 23px; padding: 0 7px; box-sizing: border-box; border-right: 1px solid #e4e4e4; border-bottom: 1px solid #e4e4e4; white-space: nowrap; overflow: hidden; }
.rtable td:nth-child(-n+2) { font-size: 12.2px; }
.rtable td:nth-child(3) { font-size: 12.7px; }
.rtable td.n { text-align: right; padding-right: 8px; }
.rtable .bold td { font-weight: 700; font-size: 12px; }
.bold em { font-weight: 400; font-size: 12.5px; }
.nm { padding: 0 !important; }
.nm-in { display: flex; align-items: center; padding-left: 4px; }
.tw { width: 12px; height: 12px; color: #666; margin-right: 5px; }
.c0 { width: 14px; height: 14px; margin-right: 6px; }
.nm-in.lv { padding-left: 36px; }
.nm-in.lv .check { width: 14px; height: 14px; margin-right: 7px; }
.redbox { position: absolute; left: 805px; top: 43px; width: 237px; height: 37px; box-sizing: border-box; border: 2px solid #e84343; border-radius: 3px; }

.hs { height: 14px; flex: none; display: flex; align-items: center; background: #f4f4f4; border-top: 1px solid #e2e2e2; box-sizing: border-box; color: #6e6e6e; }
.hs .arr { margin-top: 0; }
.hthumb { width: 865px; height: 8px; background: #bdbdbd; border-radius: 4px; margin-left: 4px; flex: none; }
.hr { margin-left: auto; }
.corner { width: 14px; height: 100%; background: #dedede; flex: none; }

.status { height: 20px; flex: none; background: #eeeeee; }

.edge-win { position: absolute; left: 0; top: 868px; width: 2px; height: 25px; box-sizing: border-box; border: 1px solid #9db9e6; border-left: none; background: #fff; }
.ime { position: absolute; left: 1722px; top: 865px; width: 198px; height: 30px; }
.ime-s { position: absolute; left: 0; top: 0; width: 29px; height: 27px; z-index: 1; background: #f2511d; border-radius: 5px; transform: rotate(-9deg); color: #fff; font: italic 700 27px/27px "Liberation Sans", sans-serif; text-align: center; }
.ime-bar { position: absolute; left: 29px; top: 4px; right: 0; height: 24px; box-sizing: border-box; background: #fff; border-top: 1px solid #cfe0f5; border-bottom: 1px solid #cfe0f5; display: flex; align-items: center; color: #1a83e6; padding-left: 6px; gap: 7px; }
.ime-bar .ic { width: 17px; height: 17px; }
.ime-cn { font-family: "Noto Sans CJK SC", sans-serif; font-size: 16px; font-weight: 700; width: 17px; text-align: center; }
.ime-p { font-size: 16px; font-weight: 700; width: 17px; text-align: center; margin-top: -4px; }
</style>
